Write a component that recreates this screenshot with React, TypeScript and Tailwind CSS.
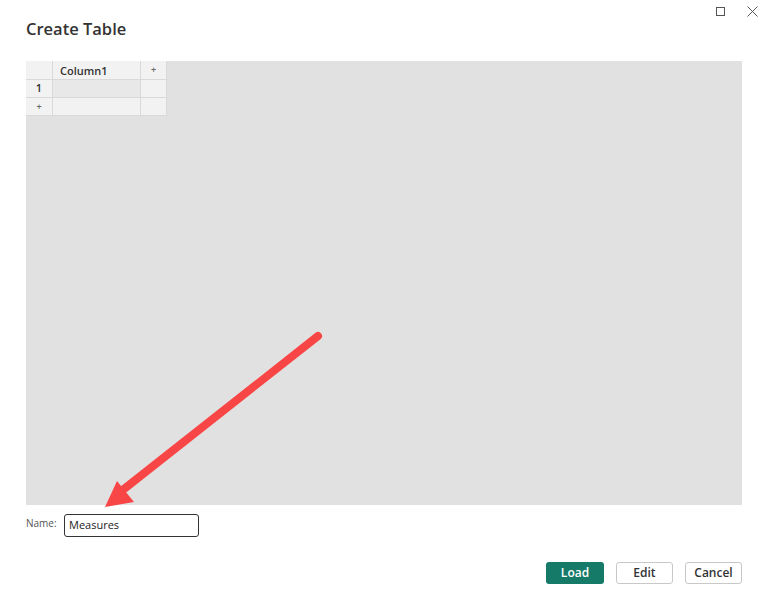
import React from "react";

export default function App() {
  return (
    <div
      className="w-[768px] h-[611px] bg-white relative overflow-hidden text-[#333]"
      style={{ fontFamily: '"Open Sans", "Noto Sans", sans-serif' }}
    >
      <div className="absolute right-[10px] top-[6px] flex items-center gap-[21px]">
        <svg width="10" height="10" viewBox="0 0 10 10">
          <rect x="0.5" y="0.5" width="8" height="8" fill="none" stroke="#555" strokeWidth="1" />
        </svg>
        <svg width="11" height="11" viewBox="0 0 11 11">
          <path d="M0.5 0.5 L10.5 10.5 M10.5 0.5 L0.5 10.5" stroke="#555" strokeWidth="1" />
        </svg>
      </div>

      <div className="flex flex-col px-[26px] pt-[17px]">
        <div className="text-[16.5px] font-semibold leading-[24px] text-[#333] h-[44px]">Create Table</div>

        <div className="w-[716px] h-[444px] bg-[#e1e1e1] relative">
          <div className="grid grid-cols-[27px_88px_26px] text-[11px] font-semibold text-[#333] w-[141px]">
            <div className="h-[19px] bg-[#f2f2f2] border-r border-b border-[#d9d9d9]" />
            <div className="h-[19px] bg-[#f2f2f2] border-r border-b border-[#d9d9d9] pl-[7px] leading-[19px]">Column1</div>
            <div className="h-[19px] bg-[#f2f2f2] border-r border-b border-[#d9d9d9] flex items-center justify-center text-[9px] text-[#666]">+</div>

            <div className="h-[18px] bg-[#f2f2f2] border-r border-b border-[#d9d9d9] flex items-center justify-center">1</div>
            <div className="h-[18px] bg-[#e8e8e8] border-r border-b border-[#d9d9d9]" />
            <div className="h-[18px] bg-[#f2f2f2] border-r border-b border-[#d9d9d9]" />

            <div className="h-[18px] bg-[#f2f2f2] border-r border-b border-[#d9d9d9] flex items-center justify-center text-[9px] text-[#666]">+</div>
            <div className="h-[18px] bg-[#f2f2f2] border-r border-b border-[#d9d9d9]" />
            <div className="h-[18px] bg-[#f2f2f2] border-r border-b border-[#d9d9d9]" />
          </div>
        </div>

        <div className="flex items-center mt-[9px] h-[22px]">
          <span className="text-[10px] text-[#555] w-[38px] -mt-[4px]">Name:</span>
          <div className="w-[135px] h-[23px] border border-[#333] rounded-[3px] flex items-center pl-[4px] text-[11px] text-[#222]">
            Measures
          </div>
        </div>

        <div className="flex justify-end gap-[12px] mt-[26px] text-[12px] font-semibold">
          <button className="w-[58px] h-[22px] bg-[#157a68] text-white rounded-[3px]">Load</button>
          <button className="w-[57px] h-[22px] bg-white border border-[#c8c8c8] rounded-[3px] text-[#333]">Edit</button>
          <button className="w-[57px] h-[22px] bg-white border border-[#c8c8c8] rounded-[3px] text-[#333]">Cancel</button>
        </div>
      </div>

      <svg className="absolute left-0 top-0 pointer-events-none" width="768" height="611">
        <line x1="318" y1="336" x2="124" y2="489" stroke="#f84646" strokeWidth="8" strokeLinecap="round" />
        <polygon points="105,507 117,481 134,502" fill="#f84646" />
      </svg>
    </div>
  );
}
